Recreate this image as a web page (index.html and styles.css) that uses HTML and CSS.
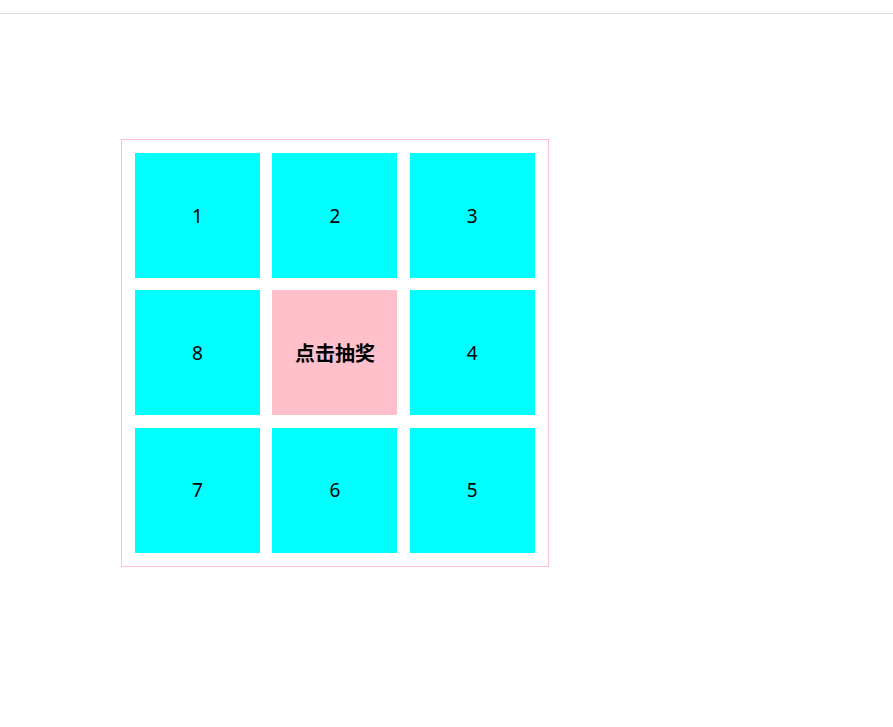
FILE: index.html
```html
<!DOCTYPE html>
<html lang="zh-CN">
<head>
<meta charset="utf-8">
<title>抽奖</title>
<link rel="stylesheet" href="styles.css">
</head>
<body>
<div class="topbar"></div>
<div class="stage">
  <div class="board">
    <div class="cell">1</div>
    <div class="cell">2</div>
    <div class="cell">3</div>
    <div class="cell">8</div>
    <div class="cell start">点击抽奖</div>
    <div class="cell">4</div>
    <div class="cell">7</div>
    <div class="cell">6</div>
    <div class="cell">5</div>
  </div>
</div>
</body>
</html>
```

FILE: styles.css
```css
html, body {
  margin: 0;
  padding: 0;
  background: #ffffff;
}

body {
  font-family: "Noto Sans", "Noto Sans CJK SC", sans-serif;
  color: #000000;
}

.topbar {
  height: 13px;
  border-bottom: 1px solid #dcdcdc;
}

.stage {
  padding: 125px 0 0 121px;
}

.board {
  display: grid;
  grid-template-columns: repeat(3, 125px);
  grid-template-rows: repeat(3, 125px);
  gap: 12.4px;
  padding: 13px 13.2px 13.2px 13px;
  width: max-content;
  border: 1px solid #ffc0cb;
}

.cell {
  display: flex;
  align-items: center;
  justify-content: center;
  background: #00ffff;
  font-size: 19px;
}

.cell.start {
  background: #ffc0cb;
  font-family: "Noto Sans CJK SC", sans-serif;
  font-weight: bold;
  font-size: 20px;
  cursor: pointer;
}
```
